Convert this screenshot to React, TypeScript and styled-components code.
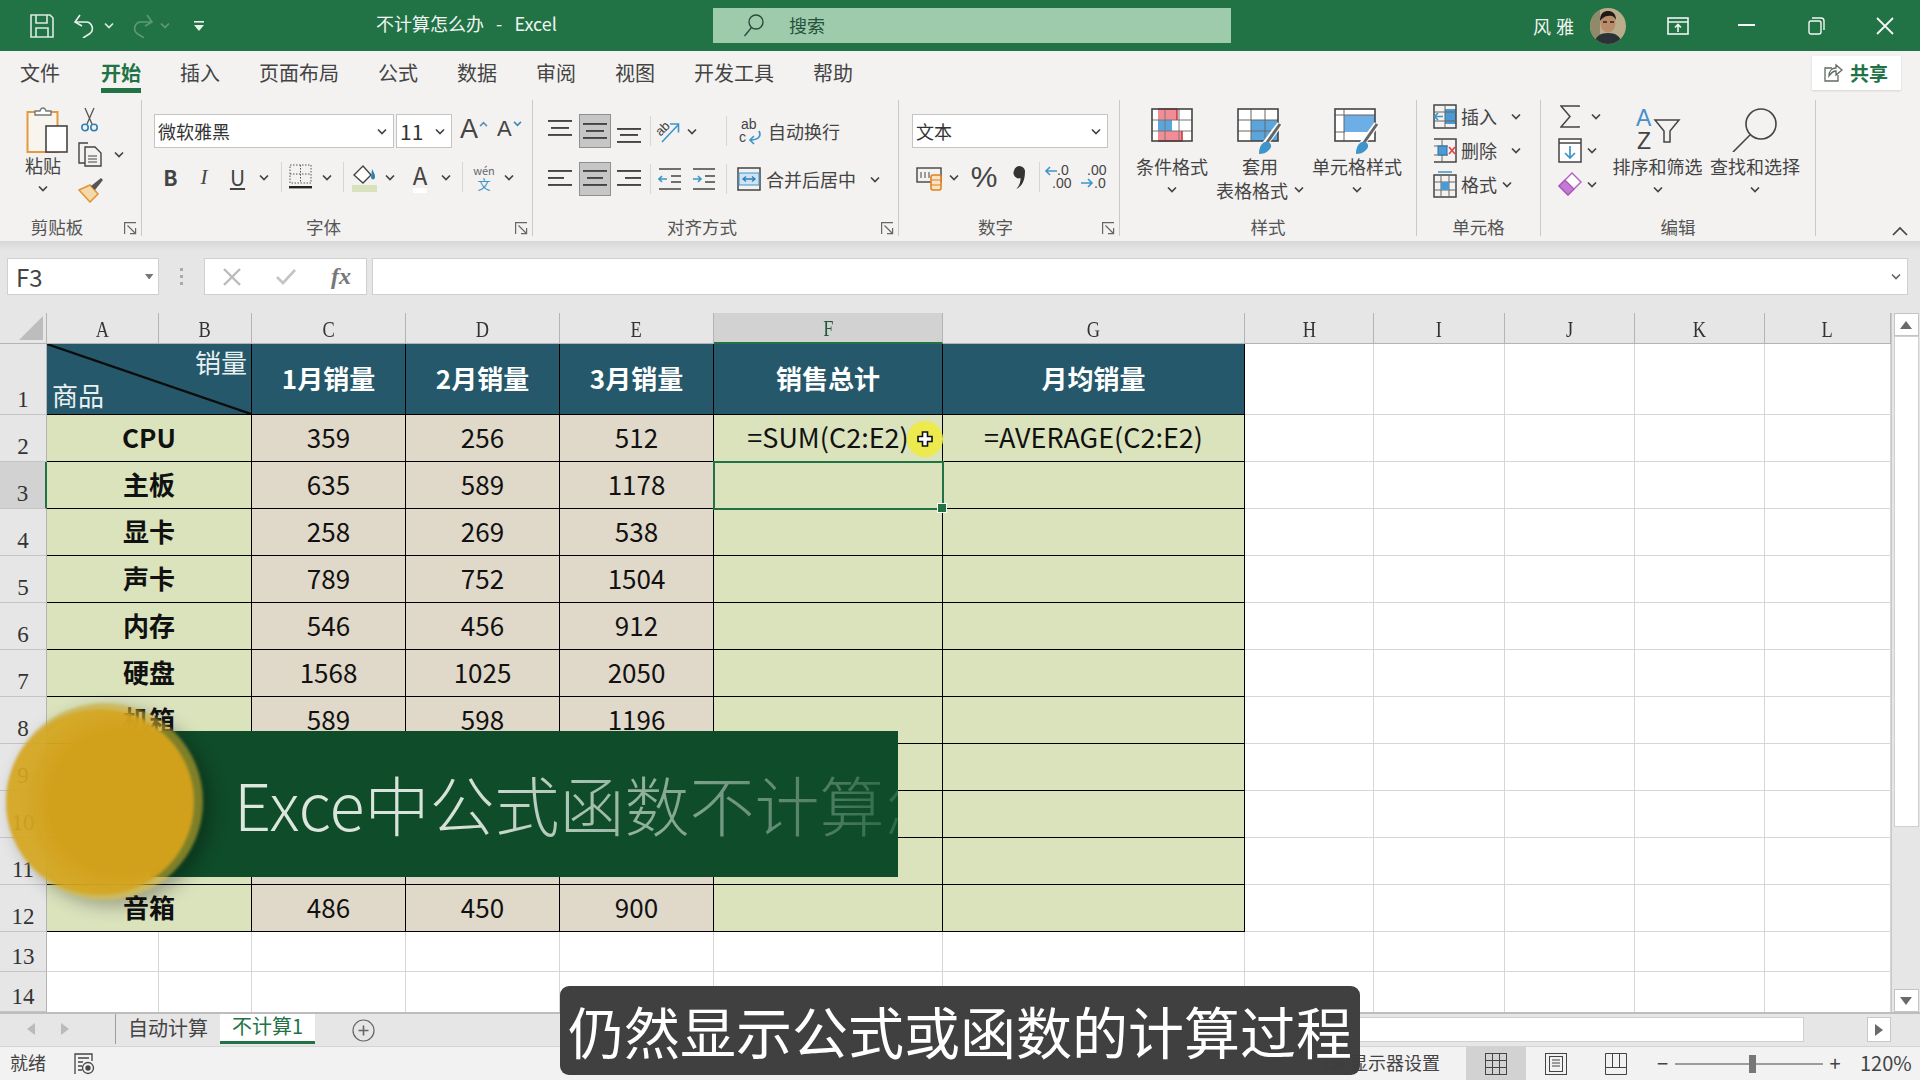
import React from "react";
import styled, { createGlobalStyle } from "styled-components";

const CJK = `"Noto Sans CJK SC", "Noto Sans", sans-serif`;
const GREEN = "#217346";

const GlobalStyle = createGlobalStyle`
  html, body { margin: 0; padding: 0; background: #fff; }
  body { font-family: ${CJK}; color: #444; }
  * { box-sizing: border-box; }
`;

const Page = styled.div`
  position: relative;
  width: 1920px;
  height: 1080px;
  overflow: hidden;
  display: flex;
  flex-direction: column;
  background: #f3f2f1;
`;

/* title bar */
const TitleBar = styled.div`
  height: 51px;
  flex: none;
  background: ${GREEN};
  display: flex;
  align-items: center;
  color: #fff;
`;
const QuickBtn = styled.div<{ $w: number; $ml?: number }>`
  width: ${({ $w }) => $w}px;
  margin-left: ${({ $ml }) => $ml ?? 0}px;
  display: flex;
  align-items: center;
  justify-content: center;
  flex: none;
`;
const DocTitle = styled.div`
  margin-left: 171px;
  width: 337px;
  flex: none;
  font-size: 18px;
  line-height: 24px;
  padding-bottom: 5px;
  white-space: pre;
  color: #f0f5f2;
`;
const SearchBox = styled.div`
  width: 518px;
  height: 35px;
  flex: none;
  background: #9fcbad;
  display: flex;
  align-items: center;
  padding: 0 0 2px 30px;
  gap: 24px;
  font-size: 18px;
  color: #24523a;
`;
const UserName = styled.div`
  margin-left: 302px;
  width: 42px;
  flex: none;
  font-size: 18px;
  letter-spacing: 5px;
  white-space: nowrap;
  color: #f2f6f3;
`;
const Avatar = styled.div`
  margin-left: 15px;
  width: 36px;
  height: 36px;
  flex: none;
  border-radius: 50%;
  overflow: hidden;
  display: flex;
`;

/* tabs */
const TabRow = styled.div`
  height: 49px;
  flex: none;
  position: relative;
  display: flex;
  gap: 39px;
  padding: 9px 0 0 20px;
  font-size: 20px;
  line-height: 26px;
  color: #444;
`;
const Tab = styled.div<{ $active?: boolean }>`
  height: 33px;
  white-space: nowrap;
  font-weight: ${({ $active }) => ($active ? 700 : 400)};
  color: ${({ $active }) => ($active ? GREEN : "#444")};
  border-bottom: ${({ $active }) => ($active ? `5px solid ${GREEN}` : "none")};
  &:first-child {
    margin-right: 2px;
  }
`;
const ShareBtn = styled.div`
  position: absolute;
  left: 1812px;
  top: 5px;
  width: 89px;
  height: 34px;
  background: #fff;
  display: flex;
  align-items: center;
  gap: 7px;
  padding-left: 11px;
  font-size: 19px;
  font-weight: 700;
  color: ${GREEN};
  box-shadow: 0 1px 2px rgba(0, 0, 0, 0.12);
`;

/* ribbon */
const Ribbon = styled.div`
  height: 141px;
  flex: none;
  display: flex;
  font-size: 18px;
  color: #444;
`;
const Group = styled.div<{ $w: number }>`
  position: relative;
  width: ${({ $w }) => $w}px;
  flex: none;
  height: 136px;
  border-right: 1px solid #c9c9c9;
  display: flex;
  flex-direction: column;
`;
const GroupBody = styled.div<{ $pl?: number }>`
  height: 115px;
  flex: none;
  display: flex;
  padding-left: ${({ $pl }) => $pl ?? 0}px;
`;
const GroupLabel = styled.div<{ $launcher?: boolean }>`
  height: 24px;
  line-height: 24px;
  text-align: center;
  font-size: 17.5px;
  color: #555;
  padding-right: ${({ $launcher }) => ($launcher ? 27 : 0)}px;
`;
const Launcher = styled.div`
  position: absolute;
  right: 4px;
  bottom: 1px;
  display: flex;
`;
const Rows = styled.div<{ $gap?: number; $pt?: number }>`
  display: flex;
  flex-direction: column;
  gap: ${({ $gap }) => $gap ?? 12}px;
  padding-top: ${({ $pt }) => $pt ?? 14}px;
`;
const Row = styled.div`
  height: 34px;
  display: flex;
  align-items: center;
  flex: none;
`;
const Btn = styled.div<{ $w: number; $ml?: number; $active?: boolean; $fs?: number }>`
  width: ${({ $w }) => $w}px;
  height: 34px;
  margin-left: ${({ $ml }) => $ml ?? 0}px;
  flex: none;
  display: flex;
  align-items: center;
  justify-content: center;
  background: ${({ $active }) => ($active ? "#c6c6c6" : "transparent")};
  outline: ${({ $active }) => ($active ? "1px solid #8f8f8f" : "none")};
  outline-offset: -1px;
  white-space: nowrap;
  font-size: ${({ $fs }) => $fs ?? 18}px;
`;
const GrowA = styled.div<{ $w: number; $fs: number; $ml: number }>`
  width: ${({ $w }) => $w}px;
  height: 34px;
  margin-left: ${({ $ml }) => $ml}px;
  flex: none;
  display: flex;
  align-items: flex-start;
  font-size: ${({ $fs }) => $fs}px;
  line-height: 30px;
  color: #444;
  font-family: "Liberation Sans", sans-serif;
  gap: 1px;
`;
const CaretSlot = styled.div`
  margin-top: 7px;
  display: flex;
`;
const Sep = styled.div<{ $ml: number }>`
  width: 1px;
  height: 30px;
  flex: none;
  margin-left: ${({ $ml }) => $ml}px;
  background: #d6d6d6;
`;
const Combo = styled.div<{ $w: number; $ml?: number; $fs?: number }>`
  width: ${({ $w }) => $w}px;
  height: 34px;
  margin-left: ${({ $ml }) => $ml ?? 0}px;
  flex: none;
  background: #fff;
  border: 1px solid #c4c4c4;
  display: flex;
  align-items: center;
  justify-content: space-between;
  padding: 0 6px 0 3px;
  font-size: ${({ $fs }) => $fs ?? 18}px;
  color: #333;
`;
const PasteCol = styled.div`
  width: 44px;
  margin-left: 21px;
  flex: none;
  padding-top: 7px;
  display: flex;
  flex-direction: column;
  align-items: center;
  line-height: 23px;
`;
const PasteIconSlot = styled.div`
  height: 47px;
  margin-left: 7px;
  display: flex;
`;
const StackCol = styled.div<{ $ml: number; $pt?: number }>`
  margin-left: ${({ $ml }) => $ml}px;
  flex: none;
  display: flex;
  flex-direction: column;
  padding-top: ${({ $pt }) => $pt ?? 0}px;
`;
const ClipRow = styled.div`
  height: 35px;
  display: flex;
  align-items: center;
`;
const BigBtn = styled.div<{ $w: number; $ml?: number }>`
  width: ${({ $w }) => $w}px;
  margin-left: ${({ $ml }) => $ml ?? 0}px;
  flex: none;
  padding-top: 8px;
  display: flex;
  flex-direction: column;
  align-items: center;
  line-height: 24px;
  font-size: 18px;
  white-space: nowrap;
`;
const BigIcon = styled.div`
  height: 46px;
  display: flex;
  align-items: flex-start;
`;
const ChevLine = styled.div`
  height: 23px;
  display: flex;
  align-items: center;
  gap: 6px;
`;
const SmallRow = styled.div`
  height: 34px;
  display: flex;
  align-items: center;
  white-space: nowrap;
  padding-bottom: 2px;
`;
const SmallIcon = styled.div<{ $w?: number; $mr?: number }>`
  width: ${({ $w }) => $w ?? 24}px;
  margin-right: ${({ $mr }) => $mr ?? 4}px;
  flex: none;
  display: flex;
  justify-content: center;
`;
const ChevSlot = styled.div<{ $ml: number }>`
  margin-left: ${({ $ml }) => $ml}px;
  display: flex;
`;
const RibbonEnd = styled.div`
  flex: 1;
  display: flex;
  justify-content: flex-end;
  align-items: flex-end;
  padding: 0 12px 5px 0;
`;
const RibbonShade = styled.div`
  height: 9px;
  flex: none;
  background: linear-gradient(#d6d6d6, #e6e6e6);
`;

/* formula bar */
const FormulaBar = styled.div`
  height: 63px;
  flex: none;
  background: #e6e6e6;
  padding-top: 8px;
  display: flex;
  align-items: flex-start;
  padding-left: 7px;
`;
const NameBox = styled.div`
  width: 152px;
  height: 37px;
  background: #fff;
  border: 1px solid #d0d0d0;
  display: flex;
  align-items: center;
  justify-content: space-between;
  padding: 0 5px 0 8px;
  font-size: 24px;
  color: #444;
`;
const DotsHandle = styled.div`
  width: 45px;
  height: 37px;
  display: flex;
  align-items: center;
  justify-content: center;
`;
const FxBox = styled.div`
  width: 163px;
  height: 37px;
  background: #fff;
  border: 1px solid #d0d0d0;
  display: flex;
  align-items: center;
  padding-left: 18px;
  gap: 35px;
`;
const FormulaInput = styled.div`
  margin-left: 5px;
  width: 1536px;
  height: 37px;
  background: #fff;
  border: 1px solid #d0d0d0;
  display: flex;
  align-items: center;
  justify-content: flex-end;
  padding-right: 6px;
`;

/* sheet */
const SheetArea = styled.div`
  height: 699px;
  flex: none;
  display: flex;
  background: #fff;
`;
const Grid = styled.div`
  width: 1891px;
  flex: none;
  display: grid;
  grid-template-columns: 47px 112px 93px 154px 154px 154px 229px 302px 129px 131px 130px 130px 126px;
  grid-template-rows: 31px 71px repeat(11, 47px) 40px 40px;
`;
const Corner = styled.div`
  background: #e6e6e6;
  position: relative;
  border-bottom: 1px solid #b4b4b4;
  border-right: 1px solid #b4b4b4;
  display: flex;
  align-items: flex-end;
  justify-content: flex-end;
  padding: 0 3px 3px 0;
`;
const ColHead = styled.div<{ $active?: boolean }>`
  background: ${({ $active }) => ($active ? "#d2d2d2" : "#e6e6e6")};
  color: ${({ $active }) => ($active ? "#1f5a3a" : "#333")};
  border-right: 1px solid #b4b4b4;
  border-bottom: ${({ $active }) => ($active ? `2px solid ${GREEN}` : "1px solid #b4b4b4")};
  font-family: "Liberation Serif", serif;
  font-size: 23px;
  display: flex;
  align-items: center;
  justify-content: center;
  padding-top: 3px;
`;
const HeadLetter = styled.span`
  display: inline-block;
  transform: scaleX(0.8);
`;
const RowHead = styled.div<{ $active?: boolean }>`
  background: ${({ $active }) => ($active ? "#d2d2d2" : "#e6e6e6")};
  color: #333;
  border-bottom: 1px solid #c4c4c4;
  border-right: ${({ $active }) => ($active ? `2px solid ${GREEN}` : "1px solid #b4b4b4")};
  font-family: "Liberation Serif", serif;
  font-size: 23px;
  line-height: 26px;
  display: flex;
  align-items: flex-end;
  justify-content: center;
  padding-bottom: 1px;
`;
const kindBg: Record<string, string> = { head: "#24586a", name: "#dbe3bd", num: "#e0d8c8", calc: "#dbe3bd" };
const Cell = styled.div<{ $kind: "head" | "name" | "num" | "calc"; $span?: number }>`
  grid-column: span ${({ $span }) => $span ?? 1};
  position: relative;
  background: ${({ $kind }) => kindBg[$kind]};
  color: ${({ $kind }) => ($kind === "head" ? "#fff" : "#111")};
  font-size: 26px;
  font-weight: ${({ $kind }) => ($kind === "head" || $kind === "name" ? 700 : 400)};
  border-right: 1px solid #000;
  border-bottom: 1px solid #000;
  padding-bottom: 4px;
  display: flex;
  align-items: center;
  justify-content: center;
  white-space: nowrap;
`;
const CornerCell = styled(Cell)`
  flex-direction: column;
  align-items: stretch;
  justify-content: space-between;
  font-weight: 400;
  color: #e9f0f2;
  line-height: 32px;
  padding: 2px 4px 3px 5px;
`;
const CornerTop = styled.div`
  text-align: right;
`;
const Diagonal = styled.svg`
  position: absolute;
  left: 0;
  top: 0;
  width: 100%;
  height: 100%;
`;
const Selected = styled(Cell)`
  z-index: 2;
  outline: 2.5px solid ${GREEN};
  outline-offset: -1.5px;
  &::after {
    content: "";
    position: absolute;
    right: -5px;
    bottom: -5px;
    width: 8px;
    height: 8px;
    background: ${GREEN};
    border: 1px solid #fff;
  }
`;
const Formula = styled.span`
  font-size: 27px;
`;
const Cursor = styled.div`
  position: absolute;
  right: -1px;
  top: 6px;
  width: 36px;
  height: 36px;
  border-radius: 50%;
  background: #ecea4c;
  display: flex;
  align-items: center;
  justify-content: center;
  z-index: 3;
`;
const Blank = styled.div<{ $noBottom?: boolean }>`
  border-right: 1px solid #d6d6d6;
  border-bottom: ${({ $noBottom }) => ($noBottom ? "none" : "1px solid #d6d6d6")};
`;
const VScroll = styled.div`
  flex: 1;
  background: #e6e6e6;
  border-left: 1px solid #c8c8c8;
  display: flex;
  flex-direction: column;
  align-items: center;
`;
const ScrollBtn = styled.div`
  width: 25px;
  height: 23px;
  flex: none;
  background: #fff;
  border: 1px solid #c4c4c4;
  display: flex;
  align-items: center;
  justify-content: center;
`;
const VThumb = styled.div`
  width: 25px;
  height: 491px;
  flex: none;
  background: #fff;
  border: 1px solid #d0d0d0;
`;
const VTrack = styled.div`
  flex: 1;
`;

/* sheet tabs */
const TabBar = styled.div`
  height: 34px;
  flex: none;
  background: #e6e6e6;
  border-top: 2px solid #bdbdbd;
  display: flex;
  align-items: flex-start;
`;
const NavArrows = styled.div`
  width: 116px;
  height: 30px;
  flex: none;
  display: flex;
  align-items: center;
  gap: 26px;
  padding-left: 27px;
  border-right: 1px solid #9d9d9d;
`;
const SheetTab = styled.div<{ $active?: boolean }>`
  width: ${({ $active }) => ($active ? 95 : 104)}px;
  height: 30px;
  flex: none;
  display: flex;
  align-items: center;
  justify-content: center;
  font-size: 20px;
  padding-bottom: 4px;
  background: ${({ $active }) => ($active ? "#fff" : "transparent")};
  color: ${({ $active }) => ($active ? GREEN : "#444")};
  border-bottom: ${({ $active }) => ($active ? `3px solid ${GREEN}` : "none")};
`;
const AddSheet = styled.div`
  margin-left: 37px;
  height: 32px;
  display: flex;
  align-items: center;
`;
const HScroll = styled.div`
  margin: 3px 0 0 auto;
  height: 25px;
  flex: none;
  display: flex;
  align-items: center;
`;
const HThumb = styled.div`
  width: 904px;
  height: 25px;
  background: #fff;
  border: 1px solid #d0d0d0;
`;
const HTrack = styled.div`
  width: 63px;
`;
const HBtn = styled.div`
  width: 24px;
  height: 25px;
  background: #fff;
  border: 1px solid #c8c8c8;
  display: flex;
  align-items: center;
  justify-content: center;
`;
const HEnd = styled.div`
  width: 29px;
  flex: none;
`;

/* status bar */
const StatusBar = styled.div`
  flex: 1;
  display: flex;
  align-items: center;
  background: #f2f2f2;
  border-top: 1px solid #d4d4d4;
  font-size: 18px;
  color: #444;
  padding-left: 10px;
`;
const StatusText = styled.span`
  padding-bottom: 3px;
`;
const StatusMacro = styled.div`
  margin-left: 28px;
  display: flex;
`;
const StatusDisplay = styled.div`
  margin-left: 1229px;
  width: 141px;
  flex: none;
  white-space: nowrap;
  display: flex;
  align-items: center;
  gap: 5px;
`;
const ViewBtn = styled.div<{ $active?: boolean }>`
  width: 60px;
  height: 33px;
  flex: none;
  display: flex;
  align-items: center;
  justify-content: center;
  background: ${({ $active }) => ($active ? "#d2d2d2" : "transparent")};
`;
const ZoomSign = styled.div<{ $w: number }>`
  width: ${({ $w }) => $w}px;
  flex: none;
  text-align: center;
  font-size: 20px;
  padding-bottom: 3px;
`;
const ZoomTrack = styled.div`
  position: relative;
  width: 148px;
  height: 2px;
  background: #9c9c9c;
  flex: none;
`;
const ZoomThumb = styled.div`
  position: absolute;
  left: 74px;
  top: -8px;
  width: 7px;
  height: 18px;
  background: #777;
`;
const ZoomText = styled.div`
  margin-left: 13px;
  font-size: 20px;
  padding-bottom: 3px;
`;
const ZoomGap = styled.div`
  width: 4px;
  flex: none;
`;

/* overlays of the video */
const Banner = styled.div`
  position: absolute;
  left: 150px;
  top: 731px;
  width: 748px;
  height: 146px;
  background: #0f4c29;
  display: flex;
  align-items: center;
  overflow: hidden;
  padding: 0 0 2px 84px;
`;
const BannerText = styled.div`
  width: 664px;
  flex: none;
  font-size: 65px;
  line-height: 90px;
  font-weight: 300;
  white-space: nowrap;
  overflow: hidden;
  color: transparent;
  background: linear-gradient(90deg, #dfe8df 0%, #d5e1d7 35%, #8fb09b 62%, #527f65 88%, #2c6a47 100%);
  -webkit-background-clip: text;
  background-clip: text;
`;
const Badge = styled.div`
  position: absolute;
  left: 6px;
  top: 703px;
  width: 197px;
  height: 197px;
  border-radius: 50%;
  background: rgba(196, 160, 40, 0.62);
  box-shadow: 8px 6px 18px rgba(0, 0, 0, 0.3);
  filter: blur(1.5px);
  &::before {
    content: "";
    position: absolute;
    left: 0;
    top: 6px;
    width: 188px;
    height: 186px;
    border-radius: 50%;
    background: radial-gradient(circle 120px at 115px 93px, #d2a11c 0 72px, rgba(214, 166, 30, 0.82) 100px);
  }
`;
const Subtitle = styled.div`
  position: absolute;
  left: 560px;
  top: 986px;
  width: 800px;
  height: 89px;
  border-radius: 9px;
  background: rgba(60, 60, 60, 0.98);
  color: #fff;
  font-size: 56px;
  line-height: 87px;
  text-align: center;
  white-space: nowrap;
`;

/* icons */
const Chev = ({ c = "#444" }: { c?: string }) => (
  <svg width="10" height="7" viewBox="0 0 10 7"><path d="M1 1.5l4 4 4-4" fill="none" stroke={c} strokeWidth="1.7" /></svg>
);
const LauncherIcon = () => (
  <svg width="13" height="13" viewBox="0 0 13 13" fill="none" stroke="#666" strokeWidth="1.2">
    <path d="M.6 12V.6H12" /><path d="M3.5 3.5l7.5 7.5M11.6 6v5.6H6" />
  </svg>
);
const SaveIcon = () => (
  <svg width="24" height="24" viewBox="0 0 24 24" fill="none" stroke="#dbe9e0" strokeWidth="1.6">
    <path d="M1 1h19l3 3v19H1z" /><path d="M6 1v8h11V1M6 23v-9h12v9" />
  </svg>
);
const UndoIcon = ({ o = 1 }: { o?: number }) => (
  <svg width="24" height="24" viewBox="0 0 24 24" fill="none" stroke="#e8f1eb" strokeWidth="1.6" opacity={o}>
    <path d="M7 1L2 8l7 4" /><path d="M2 8h11a6.5 6.5 0 0 1 4 11.5L10 24" />
  </svg>
);
const RedoIcon = () => (
  <svg width="24" height="24" viewBox="0 0 24 24" fill="none" stroke="#e8f1eb" strokeWidth="1.6" opacity={0.3}>
    <path d="M17 1l5 7-7 4" /><path d="M22 8H11a6.5 6.5 0 0 0-4 11.5L14 24" />
  </svg>
);
const CustomizeIcon = () => (
  <svg width="12" height="12" viewBox="0 0 12 12" fill="#e8f1eb"><rect x="1" y="1" width="10" height="1.6" /><path d="M1 5h10l-5 6z" /></svg>
);
const SearchIcon = () => (
  <svg width="22" height="24" viewBox="0 0 22 24" fill="none" stroke="#2a4d39" strokeWidth="1.4">
    <circle cx="13" cy="9" r="7" /><path d="M8.5 14.5L1.5 23" />
  </svg>
);
const RibbonDisplayIcon = () => (
  <svg width="22" height="20" viewBox="0 0 22 20" fill="none" stroke="#f0f5f2" strokeWidth="1.6">
    <rect x="1" y="2" width="20" height="16" /><path d="M1 6h20M11 16V9M8 11.5l3-3 3 3" />
  </svg>
);
const MinIcon = () => <svg width="17" height="3"><rect width="17" height="2" fill="#f4f7f5" /></svg>;
const RestoreIcon = () => (
  <svg width="17" height="18" viewBox="0 0 17 18" fill="none" stroke="#f4f7f5" strokeWidth="1.4">
    <rect x="1" y="4" width="12" height="13" rx="2" /><path d="M4 1h9a3 3 0 0 1 3 3v9" />
  </svg>
);
const CloseIcon = () => (
  <svg width="18" height="18" viewBox="0 0 18 18" stroke="#f4f7f5" strokeWidth="1.8"><path d="M1 1l16 16M17 1L1 17" /></svg>
);
const FaceIcon = () => (
  <svg width="36" height="36" viewBox="0 0 36 36">
    <rect width="36" height="36" fill="#b9ad8c" />
    <rect x="0" width="10" height="36" fill="#8f8a6a" />
    <ellipse cx="18" cy="15" rx="7.5" ry="9.5" fill="#b98d6b" />
    <path d="M10 13c0-8 4-10 8-10s8 2 8 9c-2-3-3-5-8-4-3 0-6 2-8 5z" fill="#201a16" />
    <path d="M13 14h4M20 14h4" stroke="#2b211b" strokeWidth="1.4" />
    <path d="M4 36c1-8 7-11 14-11s13 3 14 11z" fill="#2c3138" />
  </svg>
);
const ShareIcon = () => (
  <svg width="20" height="20" viewBox="0 0 20 20" fill="none" stroke="#5f6b64" strokeWidth="1.3">
    <path d="M9 5H2v13h13v-6" /><path d="M6 13c0-5 3-8 7-8V2l6 5-6 5V8c-3 0-5 2-7 5z" />
  </svg>
);
const PasteIcon = () => (
  <svg width="42" height="46" viewBox="0 0 42 46">
    <path d="M1.5 5h30v40h-30z" fill="#f8f5ef" stroke="#e39a3d" strokeWidth="2" />
    <path d="M9 8V4h5c1-4 5-4 6 0h5v4z" fill="#fff" stroke="#777" strokeWidth="1.4" />
    <rect x="20" y="19" width="21" height="26" fill="#fff" stroke="#444" strokeWidth="1.6" />
  </svg>
);
const CutIcon = () => (
  <svg width="17" height="25" viewBox="0 0 17 25" fill="none">
    <path d="M4 1l7 16M13 1L6 17" stroke="#555" strokeWidth="1.3" />
    <circle cx="4" cy="20.5" r="3.2" stroke="#2f7fb8" strokeWidth="1.6" /><circle cx="13" cy="20.5" r="3.2" stroke="#2f7fb8" strokeWidth="1.6" />
  </svg>
);
const CopyIcon = () => (
  <svg width="24" height="25" viewBox="0 0 24 25" fill="none" stroke="#444" strokeWidth="1.4">
    <path d="M9 21H1V1h9" /><path d="M7 5h10l6 6v13H7z" fill="#f3f2f1" /><path d="M10 14h9M10 17h9M10 20h9" strokeWidth="1" />
  </svg>
);
const BrushIcon = () => (
  <svg width="26" height="26" viewBox="0 0 26 26">
    <path d="M1 13l11-5 8 9-8 8z" fill="#f5d9a8" stroke="#e2953a" strokeWidth="1.6" />
    <path d="M13 9L23 1l2 2-8 10z" fill="#555" />
  </svg>
);
const FontCaret = ({ up }: { up: boolean }) => (
  <svg width="9" height="6" viewBox="0 0 10 7"><path d={up ? "M1 6l4-4 4 4" : "M1 1l4 4 4-4"} fill="none" stroke={up ? "#5b8fb8" : "#3f86b8"} strokeWidth="1.8" /></svg>
);
const BorderIcon = () => (
  <svg width="23" height="27" viewBox="0 0 23 27" fill="none">
    <rect x="1" y="1" width="21" height="18" stroke="#555" strokeDasharray="1.5 1.5" />
    <path d="M1 10h21M11.5 1v18" stroke="#555" strokeDasharray="1.5 1.5" />
    <rect x="0" y="22" width="23" height="2.4" fill="#222" />
  </svg>
);
const FillIcon = () => (
  <svg width="25" height="29" viewBox="0 0 25 29">
    <path d="M2 12l9-9 8 9-8 8z" fill="#fff" stroke="#444" strokeWidth="1.4" />
    <path d="M20 6c2 4 3 5 3 8s-3 3-4 1z" fill="#2c7fb0" />
    <rect x="0" y="22" width="25" height="7" fill="#d8e2bc" />
  </svg>
);
const ComaIcon = () => (
  <svg width="13" height="24" viewBox="0 0 12 22"><path d="M1 5a5 5 0 1 1 10 2c0 7-3 13-8 15 3-3 4-6 4-10a5 5 0 0 1-6-7z" fill="#333" /></svg>
);
const AlignIcon = ({ lines }: { lines: [number, number, number][] }) => (
  <svg width="24" height="24" viewBox="0 0 24 24">
    {lines.map(([x, w, y], i) => (
      <rect key={i} x={x} y={y} width={w} height="1.9" fill="#444" />
    ))}
  </svg>
);
const OrientIcon = () => (
  <svg width="26" height="28" viewBox="0 0 26 28" overflow="visible">
    <text x="0" y="15" fontSize="13" fill="#444" transform="rotate(-45 8 12)" fontFamily="Liberation Sans, sans-serif">ab</text>
    <path d="M6 25L22 8M14 7h8.5v8.5" fill="none" stroke="#3f95c9" strokeWidth="1.6" />
  </svg>
);
const WrapIcon = () => (
  <svg width="24" height="28" viewBox="0 0 24 28" fill="none" overflow="visible">
    <text x="2" y="12" fontSize="14" fill="#444" fontFamily="Liberation Sans, sans-serif">ab</text>
    <text x="0" y="25" fontSize="14" fill="#444" fontFamily="Liberation Sans, sans-serif">c</text>
    <path d="M20 14c3 6-2 9-8 9M15 19l-4 4 4 4" stroke="#3f95c9" strokeWidth="1.7" />
  </svg>
);
const IndentIcon = ({ inc }: { inc?: boolean }) => (
  <svg width="24" height="24" viewBox="0 0 24 24" fill="none">
    <path d="M1 2h22M1 22h22M13 9h10M13 15h10" stroke="#444" strokeWidth="1.6" />
    <path d={inc ? "M1 12h8M6 9l3 3-3 3" : "M9 12H1M4 9l-3 3 3 3"} stroke="#3f95c9" strokeWidth="1.6" />
  </svg>
);
const MergeIcon = () => (
  <svg width="24" height="24" viewBox="0 0 24 24" fill="none">
    <rect x="1" y="1" width="22" height="22" stroke="#444" strokeWidth="1.5" />
    <rect x="2" y="6" width="20" height="12" fill="#cfe3f2" stroke="#3f95c9" />
    <path d="M6 12h12M9 9.5L6 12l3 2.5M15 9.5l3 2.5-3 2.5" stroke="#2f7fb8" strokeWidth="1.3" />
  </svg>
);
const AccountingIcon = () => (
  <svg width="28" height="28" viewBox="0 0 28 28" fill="none">
    <rect x="1" y="5" width="24" height="14" stroke="#444" strokeWidth="1.4" />
    <path d="M5 9v6M9 9v6M13 9v6" stroke="#444" />
    <rect x="15" y="12" width="10" height="15" rx="2" fill="#f7e3c8" stroke="#e2811c" strokeWidth="1.6" />
    <path d="M15 17h10M15 22h10" stroke="#e2811c" />
  </svg>
);
const DecimalIcon = ({ inc }: { inc?: boolean }) => (
  <svg width="26" height="28" viewBox="0 0 26 28" overflow="visible">
    <text x={inc ? 7 : 12} y="12" fontSize="14" fill="#444" fontFamily="Liberation Sans, sans-serif">{inc ? ".00" : ".0"}</text>
    <text x={inc ? 14 : 7} y="25" fontSize="14" fill="#444" fontFamily="Liberation Sans, sans-serif">{inc ? ".0" : ".00"}</text>
    <path d={inc ? "M1 20h11M8 16l4 4-4 4" : "M12 8H1M5 4L1 8l4 4"} fill="none" stroke="#3f95c9" strokeWidth="1.6" />
  </svg>
);
const gridLines = "M1 12h40M1 23h40M14 1v32M28 1v32";
const CondIcon = () => (
  <svg width="42" height="34" viewBox="0 0 42 34">
    <rect x="1" y="1" width="40" height="32" fill="#fff" />
    <path d="M7 1h19v11H7zM7 23h24v10H7z" fill="#f38d95" />
    <rect x="7" y="12" width="14" height="11" fill="#5aa5dc" />
    <path d={gridLines} stroke="#777" fill="none" />
    <path d="M7 1h19v11M7 33h24V23" stroke="#c9323c" strokeWidth="1.5" fill="none" />
    <rect x="1" y="1" width="40" height="32" fill="none" stroke="#444" strokeWidth="1.6" />
  </svg>
);
const TableIcon = ({ light }: { light?: boolean }) => (
  <svg width="46" height="48" viewBox="0 0 46 48">
    <rect x="1" y="1" width="40" height="32" fill="#fff" />
    <rect x={light ? 10 : 14} y={light ? 7 : 12} width={light ? 31 : 27} height={light ? 17 : 21} fill={light ? "#6eaee6" : "#5aa5dc"} />
    <path d={light ? "M1 7h40M1 24h10M10 1v32" : gridLines} stroke="#666" fill="none" />
    <rect x="1" y="1" width="40" height="32" fill="none" stroke="#444" strokeWidth="1.6" />
    <path d="M43 16L28 36" stroke="#fff" strokeWidth="6" />
    <path d="M43 16L29 36" stroke="#666" strokeWidth="3" />
    <path d="M22 46c0-8 4-13 9-12 4 1 4 6 1 8-3 3-6 4-10 4z" fill="#3f95c9" />
  </svg>
);
const SheetInsert = () => (
  <svg width="24" height="25" viewBox="0 0 24 25" fill="none">
    <rect x="12" y="5" width="11" height="15" fill="#4a9ad4" />
    <rect x="1" y="1" width="22" height="23" stroke="#444" strokeWidth="1.5" />
    <path d="M1 8h22M1 17h22M12 1v23" stroke="#666" />
    <path d="M10 12.5H2M5 9l-3.5 3.5L5 16" stroke="#3f95c9" strokeWidth="1.7" />
  </svg>
);
const SheetDelete = () => (
  <svg width="24" height="25" viewBox="0 0 24 25" fill="none">
    <path d="M1 1h22v23H1" stroke="#444" strokeWidth="1.5" />
    <path d="M1 8h14M1 17h14M9 1v23" stroke="#666" />
    <rect x="5" y="8" width="9" height="9" fill="#4a9ad4" stroke="#2f6f9e" />
    <path d="M16 9l6 7M22 9l-6 7" stroke="#e04b4b" strokeWidth="1.8" />
  </svg>
);
const SheetFormat = () => (
  <svg width="24" height="28" viewBox="0 0 24 28" fill="none">
    <rect x="1" y="5" width="22" height="22" stroke="#444" strokeWidth="1.5" />
    <path d="M1 12h22M1 20h22M8 5v22M16 5v22" stroke="#666" />
    <rect x="8" y="12" width="8" height="8" fill="#4a9ad4" />
    <path d="M5 2h14" stroke="#3f95c9" strokeWidth="1.5" />
  </svg>
);
const SigmaIcon = () => (
  <svg width="20" height="23" viewBox="0 0 20 23" fill="none"><path d="M19 2V1H1l9 10.5L1 22h18v-1" stroke="#444" strokeWidth="1.5" /></svg>
);
const FillDownIcon = () => (
  <svg width="24" height="25" viewBox="0 0 24 25" fill="none">
    <rect x="1" y="1" width="22" height="23" fill="#fff" stroke="#444" strokeWidth="1.5" />
    <path d="M1 5h22" stroke="#444" strokeWidth="1.5" />
    <path d="M12 8v12M7 15l5 5 5-5" stroke="#3f95c9" strokeWidth="1.7" />
  </svg>
);
const EraserIcon = () => (
  <svg width="24" height="24" viewBox="0 0 24 24">
    <path d="M1 14L14 1l9 9-13 13z" fill="#fff" stroke="#b05fc0" strokeWidth="1.4" />
    <path d="M1 14l6-6 9 9-6 6z" fill="#c47ad4" stroke="#a554b8" strokeWidth="1.2" />
  </svg>
);
const SortIcon = () => (
  <svg width="44" height="42" viewBox="0 0 44 42" fill="none" overflow="visible">
    <text x="0" y="18" fontSize="23" fill="#4a90c9" fontFamily="Liberation Sans, sans-serif">A</text>
    <text x="1" y="41" fontSize="23" fill="#444" fontFamily="Liberation Sans, sans-serif">Z</text>
    <path d="M19 12h24l-9 11v11h-6V23z" stroke="#444" strokeWidth="1.5" />
  </svg>
);
const FindIcon = () => (
  <svg width="46" height="44" viewBox="0 0 46 44" fill="none" stroke="#444" strokeWidth="1.6">
    <circle cx="29" cy="16" r="15" /><path d="M18 27L1 44" />
  </svg>
);
const MacroIcon = () => (
  <svg width="22" height="22" viewBox="0 0 22 22" fill="none" stroke="#444" strokeWidth="1.3">
    <path d="M1 21V1h17v7M4 5h11M4 9h5M4 13h4M4 17h4" /><circle cx="14" cy="15" r="5.5" /><circle cx="14" cy="15" r="2" fill="#444" />
  </svg>
);
const DisplayIcon = () => (
  <svg width="20" height="18" viewBox="0 0 20 18" fill="none" stroke="#444" strokeWidth="1.2">
    <path d="M1 1v12h6" /><circle cx="13" cy="10" r="5" /><circle cx="13" cy="10" r="1.8" />
  </svg>
);
const NormalViewIcon = () => (
  <svg width="22" height="22" viewBox="0 0 22 22" fill="none" stroke="#444"><rect x=".5" y=".5" width="21" height="21" /><path d="M.5 7.5h21M.5 14.5h21M7.5 .5v21M14.5 .5v21" /></svg>
);
const PageViewIcon = () => (
  <svg width="22" height="22" viewBox="0 0 22 22" fill="none" stroke="#444"><rect x=".5" y=".5" width="21" height="21" /><rect x="4.5" y="3.5" width="13" height="15" /><path d="M7 7h8M7 10h8M7 13h8" /></svg>
);
const BreakViewIcon = () => (
  <svg width="22" height="22" viewBox="0 0 22 22" fill="none" stroke="#444"><path d="M.5 21.5V.5h21v21zM.5 14.5h21M7.5 .5v14M14.5 .5v14" /></svg>
);
const Tri = ({ dir, c = "#6a6a6a", s = 1 }: { dir: "up" | "down" | "left" | "right"; c?: string; s?: number }) => {
  const d = { up: "M0 8L6 0l6 8z", down: "M0 0h12L6 8z", left: "M8 0v12L0 6z", right: "M0 0v12l8-6z" }[dir];
  const wide = dir === "up" || dir === "down";
  return (
    <svg width={(wide ? 12 : 8) * s} height={(wide ? 8 : 12) * s} viewBox={wide ? "0 0 12 8" : "0 0 8 12"}><path d={d} fill={c} /></svg>
  );
};

const ColorA = styled.span`
  font-size: 24px;
  line-height: 26px;
  border-bottom: 5px solid #fff;
`;
const Wen = styled.div`
  display: flex;
  flex-direction: column;
  align-items: center;
  font-size: 11px;
  line-height: 13px;
  color: #666;
`;
const WenBlue = styled.span`
  font-size: 13px;
  color: #3f95c9;
`;
const Percent = styled.span`
  font-family: "Liberation Sans", sans-serif;
  font-size: 30px;
`;
const FxLabel = styled.span`
  font-family: "Liberation Serif", serif;
  font-style: italic;
  font-weight: 700;
  font-size: 24px;
  color: #777;
`;
const SerifI = styled.i`
  font-family: "Liberation Serif", serif;
`;

const tabs = ["文件", "开始", "插入", "页面布局", "公式", "数据", "审阅", "视图", "开发工具", "帮助"];
const cols = ["A", "B", "C", "D", "E", "F", "G", "H", "I", "J", "K", "L"];
const data: (string | number)[][] = [
  ["CPU", 359, 256, 512],
  ["主板", 635, 589, 1178],
  ["显卡", 258, 269, 538],
  ["声卡", 789, 752, 1504],
  ["内存", 546, 456, 912],
  ["硬盘", 1568, 1025, 2050],
  ["机箱", 589, 598, 1196],
  ["", "", "", ""],
  ["", "", "", ""],
  ["", "", "", ""],
  ["音箱", 486, 450, 900],
];
const blanks = [0, 1, 2, 3, 4];

export default function App() {
  return (
    <Page>
      <GlobalStyle />
      <TitleBar>
        <QuickBtn $w={24} $ml={30}><SaveIcon /></QuickBtn>
        <QuickBtn $w={24} $ml={19}><UndoIcon /></QuickBtn>
        <QuickBtn $w={24}><Chev c="#dbe9e0" /></QuickBtn>
        <QuickBtn $w={24} $ml={9}><RedoIcon /></QuickBtn>
        <QuickBtn $w={22}><Chev c="#5f9a78" /></QuickBtn>
        <QuickBtn $w={12} $ml={17}><CustomizeIcon /></QuickBtn>
        <DocTitle>不计算怎么办   -   Excel</DocTitle>
        <SearchBox><SearchIcon />搜索</SearchBox>
        <UserName>风雅</UserName>
        <Avatar><FaceIcon /></Avatar>
        <QuickBtn $w={22} $ml={41}><RibbonDisplayIcon /></QuickBtn>
        <QuickBtn $w={17} $ml={49}><MinIcon /></QuickBtn>
        <QuickBtn $w={17} $ml={53}><RestoreIcon /></QuickBtn>
        <QuickBtn $w={18} $ml={51}><CloseIcon /></QuickBtn>
      </TitleBar>

      <TabRow>
        {tabs.map((t) => (
          <Tab key={t} $active={t === "开始"}>{t}</Tab>
        ))}
        <ShareBtn><ShareIcon />共享</ShareBtn>
      </TabRow>

      <Ribbon>
        <Group $w={142}>
          <GroupBody>
            <PasteCol>
              <PasteIconSlot><PasteIcon /></PasteIconSlot>
              粘贴
              <ChevLine><Chev /></ChevLine>
            </PasteCol>
            <StackCol $ml={13} $pt={2}>
              <ClipRow><SmallIcon $w={22} $mr={0}><CutIcon /></SmallIcon></ClipRow>
              <ClipRow><SmallIcon $w={24} $mr={12}><CopyIcon /></SmallIcon><Chev /></ClipRow>
              <ClipRow><SmallIcon $w={26} $mr={0}><BrushIcon /></SmallIcon></ClipRow>
            </StackCol>
          </GroupBody>
          <GroupLabel $launcher>剪贴板</GroupLabel>
          <Launcher><LauncherIcon /></Launcher>
        </Group>

        <Group $w={391}>
          <GroupBody $pl={12}>
            <Rows>
              <Row>
                <Combo $w={240}>微软雅黑<Chev /></Combo>
                <Combo $w={56} $ml={2} $fs={21}><span>11</span><Chev /></Combo>
                <GrowA $w={31} $ml={8} $fs={27}>A<CaretSlot><FontCaret up /></CaretSlot></GrowA>
                <GrowA $w={26} $ml={6} $fs={22}>A<CaretSlot><FontCaret up={false} /></CaretSlot></GrowA>
              </Row>
              <Row>
                <Btn $w={33} $fs={21}><b>B</b></Btn>
                <Btn $w={34} $fs={21}><SerifI>I</SerifI></Btn>
                <Btn $w={33} $fs={21}><u>U</u></Btn>
                <Btn $w={20}><Chev /></Btn>
                <Sep $ml={7} />
                <Btn $w={36}><BorderIcon /></Btn>
                <Btn $w={18}><Chev /></Btn>
                <Sep $ml={7} />
                <Btn $w={40}><FillIcon /></Btn>
                <Btn $w={12}><Chev /></Btn>
                <Btn $w={32} $ml={8}><ColorA>A</ColorA></Btn>
                <Btn $w={20}><Chev /></Btn>
                <Sep $ml={6} />
                <Btn $w={36} $ml={3}><Wen><span>wén</span><WenBlue>文</WenBlue></Wen></Btn>
                <Btn $w={14}><Chev /></Btn>
              </Row>
            </Rows>
          </GroupBody>
          <GroupLabel $launcher>字体</GroupLabel>
          <Launcher><LauncherIcon /></Launcher>
        </Group>

        <Group $w={366}>
          <GroupBody $pl={11}>
            <Rows $gap={14}>
              <Row>
                <Btn $w={32}><AlignIcon lines={[[0, 24, 1], [3, 18, 8], [0, 24, 15]]} /></Btn>
                <Btn $w={32} $ml={3} $active><AlignIcon lines={[[0, 24, 4], [3, 18, 11], [0, 24, 18]]} /></Btn>
                <Btn $w={32} $ml={2}><AlignIcon lines={[[0, 24, 9], [3, 18, 15], [0, 24, 22]]} /></Btn>
                <Sep $ml={5} />
                <Btn $w={36}><OrientIcon /></Btn>
                <Btn $w={10}><Chev /></Btn>
                <Sep $ml={29} />
                <Btn $w={22} $ml={13}><WrapIcon /></Btn>
                <Btn $w={76} $ml={4}>自动换行</Btn>
              </Row>
              <Row>
                <Btn $w={32}><AlignIcon lines={[[0, 24, 3], [0, 16, 10], [0, 24, 17]]} /></Btn>
                <Btn $w={32} $ml={3} $active><AlignIcon lines={[[0, 24, 3], [4, 16, 10], [0, 24, 17]]} /></Btn>
                <Btn $w={32} $ml={2}><AlignIcon lines={[[0, 24, 3], [8, 16, 10], [0, 24, 17]]} /></Btn>
                <Sep $ml={5} />
                <Btn $w={36} $ml={1}><IndentIcon /></Btn>
                <Btn $w={32}><IndentIcon inc /></Btn>
                <Sep $ml={6} />
                <Btn $w={24} $ml={10}><MergeIcon /></Btn>
                <Btn $w={90} $ml={5}>合并后居中</Btn>
                <Btn $w={18} $ml={10}><Chev /></Btn>
              </Row>
            </Rows>
          </GroupBody>
          <GroupLabel $launcher>对齐方式</GroupLabel>
          <Launcher><LauncherIcon /></Launcher>
        </Group>

        <Group $w={221}>
          <GroupBody $pl={13}>
            <Rows>
              <Row><Combo $w={196}>文本<Chev /></Combo></Row>
              <Row>
                <Btn $w={36}><AccountingIcon /></Btn>
                <Btn $w={12}><Chev /></Btn>
                <Btn $w={38} $ml={5}><Percent>%</Percent></Btn>
                <Btn $w={32}><ComaIcon /></Btn>
                <Sep $ml={4} />
                <Btn $w={36}><DecimalIcon /></Btn>
                <Btn $w={34}><DecimalIcon inc /></Btn>
              </Row>
            </Rows>
          </GroupBody>
          <GroupLabel $launcher>数字</GroupLabel>
          <Launcher><LauncherIcon /></Launcher>
        </Group>

        <Group $w={297}>
          <GroupBody>
            <BigBtn $w={72} $ml={16}>
              <BigIcon><CondIcon /></BigIcon>
              条件格式
              <ChevLine><Chev /></ChevLine>
            </BigBtn>
            <BigBtn $w={88} $ml={8}>
              <BigIcon><TableIcon /></BigIcon>
              套用
              <ChevLine>表格格式<Chev /></ChevLine>
            </BigBtn>
            <BigBtn $w={90} $ml={8}>
              <BigIcon><TableIcon light /></BigIcon>
              单元格样式
              <ChevLine><Chev /></ChevLine>
            </BigBtn>
          </GroupBody>
          <GroupLabel>样式</GroupLabel>
        </Group>

        <Group $w={124}>
          <GroupBody $pl={16}>
            <StackCol $ml={0}>
              <SmallRow><SmallIcon><SheetInsert /></SmallIcon>插入<ChevSlot $ml={14}><Chev /></ChevSlot></SmallRow>
              <SmallRow><SmallIcon><SheetDelete /></SmallIcon>删除<ChevSlot $ml={14}><Chev /></ChevSlot></SmallRow>
              <SmallRow><SmallIcon><SheetFormat /></SmallIcon>格式<ChevSlot $ml={5}><Chev /></ChevSlot></SmallRow>
            </StackCol>
          </GroupBody>
          <GroupLabel>单元格</GroupLabel>
        </Group>

        <Group $w={275}>
          <GroupBody $pl={17}>
            <StackCol $ml={0}>
              <SmallRow><SmallIcon $mr={9}><SigmaIcon /></SmallIcon><Chev /></SmallRow>
              <SmallRow><SmallIcon $mr={5}><FillDownIcon /></SmallIcon><Chev /></SmallRow>
              <SmallRow><SmallIcon $mr={5}><EraserIcon /></SmallIcon><Chev /></SmallRow>
            </StackCol>
            <BigBtn $w={91} $ml={11}>
              <BigIcon><SortIcon /></BigIcon>
              排序和筛选
              <ChevLine><Chev /></ChevLine>
            </BigBtn>
            <BigBtn $w={90} $ml={7}>
              <BigIcon><FindIcon /></BigIcon>
              查找和选择
              <ChevLine><Chev /></ChevLine>
            </BigBtn>
          </GroupBody>
          <GroupLabel>编辑</GroupLabel>
        </Group>

        <RibbonEnd>
          <svg width="16" height="10" viewBox="0 0 16 10"><path d="M1 9l7-7 7 7" fill="none" stroke="#444" strokeWidth="1.7" /></svg>
        </RibbonEnd>
      </Ribbon>
      <RibbonShade />

      <FormulaBar>
        <NameBox>F3<Tri dir="down" c="#777" s={0.7} /></NameBox>
        <DotsHandle>
          <svg width="4" height="18" fill="#aaa"><rect y="0" width="3" height="3" /><rect y="7" width="3" height="3" /><rect y="14" width="3" height="3" /></svg>
        </DotsHandle>
        <FxBox>
          <svg width="18" height="18" viewBox="0 0 18 18" stroke="#bbb" strokeWidth="2.4"><path d="M1 1l16 16M17 1L1 17" /></svg>
          <svg width="20" height="16" viewBox="0 0 20 16" fill="none" stroke="#c4c4c4" strokeWidth="2.6"><path d="M1 8l6 6L19 1" /></svg>
          <FxLabel>fx</FxLabel>
        </FxBox>
        <FormulaInput><Chev c="#666" /></FormulaInput>
      </FormulaBar>

      <SheetArea>
        <Grid>
          <Corner><svg width="24" height="24"><path d="M24 0v24H0z" fill="#bdbdbd" /></svg></Corner>
          {cols.map((c) => (
            <ColHead key={c} $active={c === "F"}><HeadLetter>{c}</HeadLetter></ColHead>
          ))}

          <RowHead>1</RowHead>
          <CornerCell $kind="head" $span={2}>
            <Diagonal viewBox="0 0 204 70" preserveAspectRatio="none"><path d="M0 0L204 70" stroke="#0c0c0c" strokeWidth="2.2" /></Diagonal>
            <CornerTop>销量</CornerTop>
            <div>商品</div>
          </CornerCell>
          <Cell $kind="head">1月销量</Cell>
          <Cell $kind="head">2月销量</Cell>
          <Cell $kind="head">3月销量</Cell>
          <Cell $kind="head">销售总计</Cell>
          <Cell $kind="head">月均销量</Cell>
          {blanks.map((b) => <Blank key={b} />)}

          {data.map((r, i) => (
            <React.Fragment key={i}>
              <RowHead $active={i === 1}>{i + 2}</RowHead>
              <Cell $kind="name" $span={2}>{r[0]}</Cell>
              <Cell $kind="num">{r[1]}</Cell>
              <Cell $kind="num">{r[2]}</Cell>
              <Cell $kind="num">{r[3]}</Cell>
              {i === 1 ? (
                <Selected $kind="calc" />
              ) : (
                <Cell $kind="calc">
                  {i === 0 && <Formula>=SUM(C2:E2)</Formula>}
                  {i === 0 && (
                    <Cursor>
                      <svg width="16" height="16" viewBox="0 0 16 16"><path d="M5.5 1h5v4.5H15v5h-4.5V15h-5v-4.5H1v-5h4.5z" fill="#fff" stroke="#111" strokeWidth="1.6" /></svg>
                    </Cursor>
                  )}
                </Cell>
              )}
              <Cell $kind="calc">{i === 0 && <Formula>=AVERAGE(C2:E2)</Formula>}</Cell>
              {blanks.map((b) => <Blank key={b} />)}
            </React.Fragment>
          ))}

          {[13, 14].map((n) => (
            <React.Fragment key={n}>
              <RowHead>{n}</RowHead>
              {cols.map((c) => <Blank key={c} $noBottom={n === 14} />)}
            </React.Fragment>
          ))}
        </Grid>
        <VScroll>
          <ScrollBtn><Tri dir="up" /></ScrollBtn>
          <VThumb />
          <VTrack />
          <ScrollBtn><Tri dir="down" /></ScrollBtn>
        </VScroll>
      </SheetArea>

      <TabBar>
        <NavArrows><Tri dir="left" c="#bbb" /><Tri dir="right" c="#bbb" /></NavArrows>
        <SheetTab>自动计算</SheetTab>
        <SheetTab $active>不计算1</SheetTab>
        <AddSheet>
          <svg width="23" height="23" viewBox="0 0 23 23" fill="none" stroke="#666" strokeWidth="1.2"><circle cx="11.5" cy="11.5" r="10.5" /><path d="M11.5 6.5v10M6.5 11.5h10" strokeWidth="1.6" /></svg>
        </AddSheet>
        <HScroll>
          <HThumb />
          <HTrack />
          <HBtn><Tri dir="right" /></HBtn>
        </HScroll>
        <HEnd />
      </TabBar>

      <StatusBar>
        <StatusText>就绪</StatusText>
        <StatusMacro><MacroIcon /></StatusMacro>
        <StatusDisplay><DisplayIcon /><StatusText>显示器设置</StatusText></StatusDisplay>
        <ViewBtn $active><NormalViewIcon /></ViewBtn>
        <ViewBtn><PageViewIcon /></ViewBtn>
        <ViewBtn><BreakViewIcon /></ViewBtn>
        <ZoomGap />
        <ZoomSign $w={25}>−</ZoomSign>
        <ZoomTrack><ZoomThumb /></ZoomTrack>
        <ZoomSign $w={24}>+</ZoomSign>
        <ZoomText>120%</ZoomText>
      </StatusBar>

      <Banner><BannerText>Exce中公式函数不计算怎么办</BannerText></Banner>
      <Badge />
      <Subtitle>仍然显示公式或函数的计算过程</Subtitle>
    </Page>
  );
}
